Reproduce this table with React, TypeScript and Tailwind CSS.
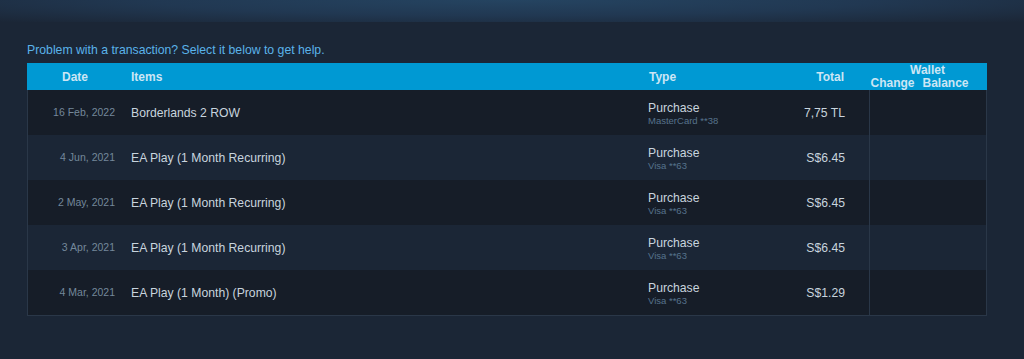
const rows = [
  { date: "16 Feb, 2022", item: "Borderlands 2 ROW", method: "MasterCard **38", total: "7,75 TL" },
  { date: "4 Jun, 2021", item: "EA Play (1 Month Recurring)", method: "Visa **63", total: "S$6.45" },
  { date: "2 May, 2021", item: "EA Play (1 Month Recurring)", method: "Visa **63", total: "S$6.45" },
  { date: "3 Apr, 2021", item: "EA Play (1 Month Recurring)", method: "Visa **63", total: "S$6.45" },
  { date: "4 Mar, 2021", item: "EA Play (1 Month) (Promo)", method: "Visa **63", total: "S$1.29" },
];

const cols = "grid grid-cols-[96px_517px_136px_92px_119px]";

export default function App() {
  return (
    <div className="min-h-[359px] w-full bg-[#1b2636] font-['Liberation_Sans',Arial,sans-serif]">
      <div className="h-[22px] w-full bg-[radial-gradient(ellipse_at_50%_0%,#254461_0%,#213852_50%,#1b2636_100%)]" />

      <div className="pl-[27px] pt-[21px]">
        <p className="text-[12.25px] leading-[14px] text-[#5ab3ea]">
          Problem with a transaction? Select it below to get help.
        </p>

        <div className="mt-[6px] w-[960px] border-x border-b border-[#2a3748]">
          <div className={`${cols} h-[27px] -mx-px bg-[#0099d3] text-[12px] font-bold leading-[12px] text-[#cde6f5]`}>
            <div className="flex items-center justify-center">Date</div>
            <div className="flex items-center pl-[8px]">Items</div>
            <div className="flex items-center pl-[9px]">Type</div>
            <div className="flex items-center justify-end pr-[24px]">Total</div>
            <div className="flex flex-col items-center justify-center">
              <span>Wallet</span>
              <span className="flex gap-[8px] pr-[16px] pt-px">
                <span>Change</span>
                <span>Balance</span>
              </span>
            </div>
          </div>

          {rows.map((r, i) => (
            <div
              key={i}
              className={`${cols} h-[45px] ${i % 2 === 0 ? "bg-[#161d28]" : "bg-[#1b2636]"}`}
            >
              <div className="flex items-center justify-end pr-[9px] pt-px text-[10.5px] text-[#74889b]">
                {r.date}
              </div>
              <div className="flex items-center pl-[7px] pt-[2px] text-[12.2px] text-[#c8d4de]">{r.item}</div>
              <div className="flex flex-col justify-center pl-[7px] pt-[2px]">
                <span className="text-[12.2px] leading-[13px] text-[#c8d4de]">Purchase</span>
                <span className="text-[9.5px] leading-[11px] text-[#56738c]">{r.method}</span>
              </div>
              <div className="flex items-center justify-end pr-[24px] pt-[2px] text-[12.2px] text-[#c8d4de]">
                {r.total}
              </div>
              <div className="border-l border-[#2a3748]" />
            </div>
          ))}
        </div>
      </div>
    </div>
  );
}
